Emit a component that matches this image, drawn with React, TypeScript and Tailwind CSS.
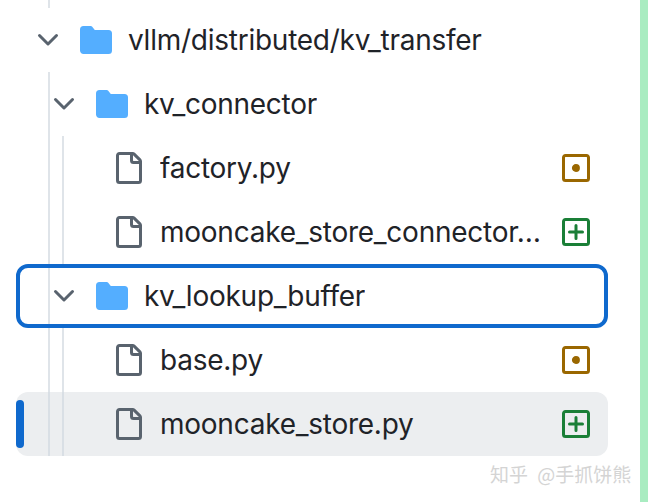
const FILE = "M2 1.75C2 .784 2.784 0 3.75 0h6.586c.464 0 .909.184 1.237.513l2.914 2.914c.329.328.513.773.513 1.237v9.586A1.75 1.75 0 0 1 13.25 16h-9.5A1.75 1.75 0 0 1 2 14.25Zm1.75-.25a.25.25 0 0 0-.25.25v12.5c0 .138.112.25.25.25h9.5a.25.25 0 0 0 .25-.25V6h-2.75A1.75 1.75 0 0 1 9 4.25V1.5Zm6.75.062V4.25c0 .138.112.25.25.25h2.688l-.011-.013-2.914-2.914-.013-.011Z";
const FOLDER = "M1.75 1A1.75 1.75 0 0 0 0 2.75v10.5C0 14.216.784 15 1.75 15h12.5A1.75 1.75 0 0 0 16 13.25v-8.5A1.75 1.75 0 0 0 14.25 3H7.5a.25.25 0 0 1-.2-.1l-.9-1.2C6.07 1.26 5.55 1 5 1H1.75Z";
const CHEVRON = "M12.78 5.22a.749.749 0 0 1 0 1.06l-4.25 4.25a.749.749 0 0 1-1.06 0L3.22 6.28a.749.749 0 1 1 1.06-1.06L8 8.939l3.72-3.719a.749.749 0 0 1 1.06 0Z";
const MODIFIED = "M13.25 1c.966 0 1.75.784 1.75 1.75v10.5A1.75 1.75 0 0 1 13.25 15H2.75A1.75 1.75 0 0 1 1 13.25V2.75C1 1.784 1.784 1 2.75 1ZM2.75 2.5a.25.25 0 0 0-.25.25v10.5c0 .138.112.25.25.25h10.5a.25.25 0 0 0 .25-.25V2.75a.25.25 0 0 0-.25-.25ZM8 10a2 2 0 1 1-.001-3.999A2 2 0 0 1 8 10Z";
const ADDED = "M2.75 1h10.5c.966 0 1.75.784 1.75 1.75v10.5A1.75 1.75 0 0 1 13.25 15H2.75A1.75 1.75 0 0 1 1 13.25V2.75C1 1.784 1.784 1 2.75 1Zm10.5 1.5H2.75a.25.25 0 0 0-.25.25v10.5c0 .138.112.25.25.25h10.5a.25.25 0 0 0 .25-.25V2.75a.25.25 0 0 0-.25-.25ZM8 4a.75.75 0 0 1 .75.75v2.5h2.5a.75.75 0 0 1 0 1.5h-2.5v2.5a.75.75 0 0 1-1.5 0v-2.5h-2.5a.75.75 0 0 1 0-1.5h2.5v-2.5A.75.75 0 0 1 8 4Z";

function Icon({ d, className }: { d: string; className: string }) {
  return (
    <svg viewBox="0 0 16 16" fill="currentColor" className={`w-8 h-8 shrink-0 ${className}`}>
      <path d={d} />
    </svg>
  );
}

function FolderRow({ name, pad, focused }: { name: string; pad: string; focused?: boolean }) {
  return (
    <div className={`h-16 flex items-center gap-4 rounded-xl ${pad} ${focused ? "relative z-10 outline-4 -outline-offset-4 outline-[#0f69cd]" : ""}`}>
      <Icon d={CHEVRON} className="text-[#59636e]" />
      <Icon d={FOLDER} className="text-[#54aeff]" />
      <span className="truncate">{name}</span>
    </div>
  );
}

function FileRow({ name, status, selected }: { name: string; status: "modified" | "added"; selected?: boolean }) {
  return (
    <div className={`relative h-16 flex items-center pl-24 pr-4 rounded-xl ${selected ? "bg-[#eceef0]" : ""}`}>
      {selected && <div className="absolute left-0 top-2 bottom-2 w-2 rounded-md bg-[#0f69cd]" />}
      <Icon d={FILE} className="text-[#59636e]" />
      <span className="ml-4 w-[384px] truncate">{name}</span>
      <Icon
        d={status === "modified" ? MODIFIED : ADDED}
        className={`ml-auto ${status === "modified" ? "text-[#9a6700]" : "text-[#1a7f37]"}`}
      />
    </div>
  );
}

export default function App() {
  return (
    <div className="relative w-[648px] h-[502px] overflow-hidden flex bg-white text-[#1f2328] text-[28px] tracking-[-0.25px] font-['Inter','Liberation_Sans',sans-serif]">
      <main className="relative w-[640px] pt-2 pl-4 pr-8">
        <FolderRow name="vllm/distributed/kv_transfer" pad="pl-4" />
        <FolderRow name="kv_connector" pad="pl-8" />
        <FileRow name="factory.py" status="modified" />
        <FileRow name="mooncake_store_connector.py" status="added" />
        <FolderRow name="kv_lookup_buffer" pad="pl-8" focused />
        <FileRow name="base.py" status="modified" />
        <FileRow name="mooncake_store.py" status="added" selected />
        <div className="absolute left-12 top-0 w-0.5 h-2 bg-[#d1d9e0]/70" />
        <div className="absolute left-12 top-[72px] w-0.5 h-[384px] bg-[#d1d9e0]/70" />
        <div className="absolute left-[62px] top-[136px] w-0.5 h-32 bg-[#d1d9e0]/70" />
        <div className="absolute left-[62px] top-[328px] w-0.5 h-32 bg-[#d1d9e0]/70" />
      </main>
      <aside className="w-2 bg-[#a9ecc1]" />
      <div className="absolute left-[490px] top-[460px] text-[19px] leading-7 tracking-normal [word-spacing:5px] text-[#d4d4d4] font-['Noto_Sans_CJK_SC',sans-serif] whitespace-nowrap">知乎 @手抓饼熊</div>
    </div>
  );
}
